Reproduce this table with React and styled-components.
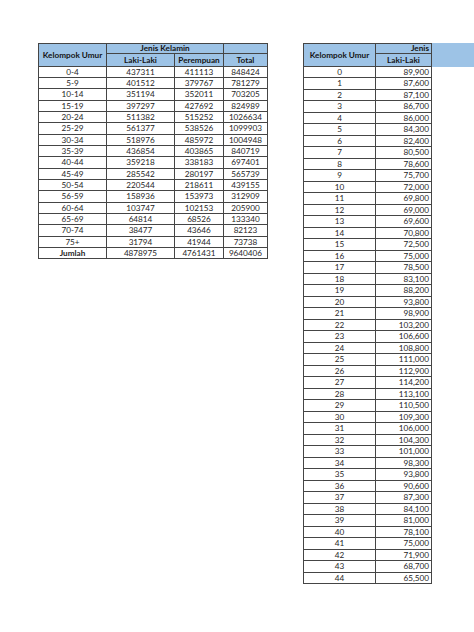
import React from "react";
import styled, { createGlobalStyle } from "styled-components";

const ageData = [
  ["0-4", 437311, 411113, 848424],
  ["5-9", 401512, 379767, 781279],
  ["10-14", 351194, 352011, 703205],
  ["15-19", 397297, 427692, 824989],
  ["20-24", 511382, 515252, 1026634],
  ["25-29", 561377, 538526, 1099903],
  ["30-34", 518976, 485972, 1004948],
  ["35-39", 436854, 403865, 840719],
  ["40-44", 359218, 338183, 697401],
  ["45-49", 285542, 280197, 565739],
  ["50-54", 220544, 218611, 439155],
  ["56-59", 158936, 153973, 312909],
  ["60-64", 103747, 102153, 205900],
  ["65-69", 64814, 68526, 133340],
  ["70-74", 38477, 43646, 82123],
  ["75+", 31794, 41944, 73738],
];

const singleAges = [
  89900, 87600, 87100, 86700, 86000, 84300, 82400, 80500, 78600, 75700,
  72000, 69800, 69000, 69600, 70800, 72500, 75000, 78500, 83100, 88200,
  93800, 98900, 103200, 106600, 108800, 111000, 112900, 114200, 113100,
  110500, 109300, 106000, 104300, 101000, 98300, 93800, 90600, 87300, 84100,
  81000, 78100, 75000, 71900, 68700, 65500,
];

const fmt = (n) => n.toLocaleString("en-US");

const GlobalStyle = createGlobalStyle`
  html, body {
    margin: 0;
    background: #ffffff;
  }
  body {
    font-family: Lato, "Liberation Sans", sans-serif;
    color: #1e1e1e;
    overflow: hidden;
  }
`;

const Page = styled.div`
  display: flex;
  align-items: flex-start;
  gap: 35px;
  padding: 43px 0 0 38px;
  width: 474px;
  height: 632px;
  box-sizing: border-box;
`;

const Sheet = styled.div`
  display: grid;
  grid-template-columns: ${(p) => p.$cols};
  grid-template-rows: 11px 13px;
  grid-auto-rows: ${(p) => p.$rows};
  flex-shrink: 0;
`;

const Cell = styled.div`
  box-sizing: border-box;
  display: flex;
  align-items: center;
  justify-content: ${(p) => p.$align || "center"};
  padding: 0 2px;
  font-size: 8.2px;
  line-height: 1;
  white-space: nowrap;
  overflow: hidden;
  border-right: 1px solid #454545;
  border-bottom: 1px solid #454545;
  border-left: ${(p) => (p.$first ? "1px solid #454545" : "none")};
  border-top: ${(p) => (p.$top ? "1px solid #454545" : "none")};
  background: ${(p) => (p.$head ? "#9dc3e6" : "#ffffff")};
  font-weight: ${(p) => (p.$bold || p.$head ? 700 : 400)};
  color: ${(p) => (p.$head ? "#141414" : "#262626")};
  grid-column: ${(p) => p.$col || "auto"};
  grid-row: ${(p) => p.$row || "auto"};
`;

const BlueFill = styled.div`
  background: #9dc3e6;
  grid-column: 3;
  grid-row: 1 / span 2;
`;

function AgeGroupTable() {
  const total = ageData.reduce(
    (acc, r) => [acc[0] + r[1], acc[1] + r[2], acc[2] + r[3]],
    [0, 0, 0]
  );
  return (
    <Sheet $cols="69px 68px 49px 44px" $rows="11px 11px 12px">
      <Cell $head $top $first $col="1" $row="1 / span 2">
        Kelompok Umur
      </Cell>
      <Cell $head $top $col="2 / span 2">
        Jenis Kelamin
      </Cell>
      <Cell $head $top $col="4" $row="1" />
      <Cell $head $col="2">Laki-Laki</Cell>
      <Cell $head $col="3">Perempuan</Cell>
      <Cell $head $col="4">Total</Cell>
      {ageData.map((r) => (
        <React.Fragment key={r[0]}>
          <Cell $first>{r[0]}</Cell>
          <Cell>{r[1]}</Cell>
          <Cell>{r[2]}</Cell>
          <Cell>{r[3]}</Cell>
        </React.Fragment>
      ))}
      <Cell $first $bold>
        Jumlah
      </Cell>
      <Cell>{total[0]}</Cell>
      <Cell>{total[1]}</Cell>
      <Cell>{total[2]}</Cell>
    </Sheet>
  );
}

function SingleAgeTable() {
  return (
    <Sheet $cols="73px 56px 43px" $rows="11px 12px">
      <Cell $head $top $first $col="1" $row="1 / span 2">
        Kelompok Umur
      </Cell>
      <Cell $head $top $col="2" $align="flex-end">
        Jenis
      </Cell>
      <BlueFill />
      <Cell $head $col="2">Laki-Laki</Cell>
      {singleAges.map((v, i) => (
        <React.Fragment key={i}>
          <Cell $first $col="1">
            {i}
          </Cell>
          <Cell $col="2" $align="flex-end">
            {fmt(v)}
          </Cell>
        </React.Fragment>
      ))}
    </Sheet>
  );
}

export default function App() {
  return (
    <Page>
      <GlobalStyle />
      <AgeGroupTable />
      <SingleAgeTable />
    </Page>
  );
}
